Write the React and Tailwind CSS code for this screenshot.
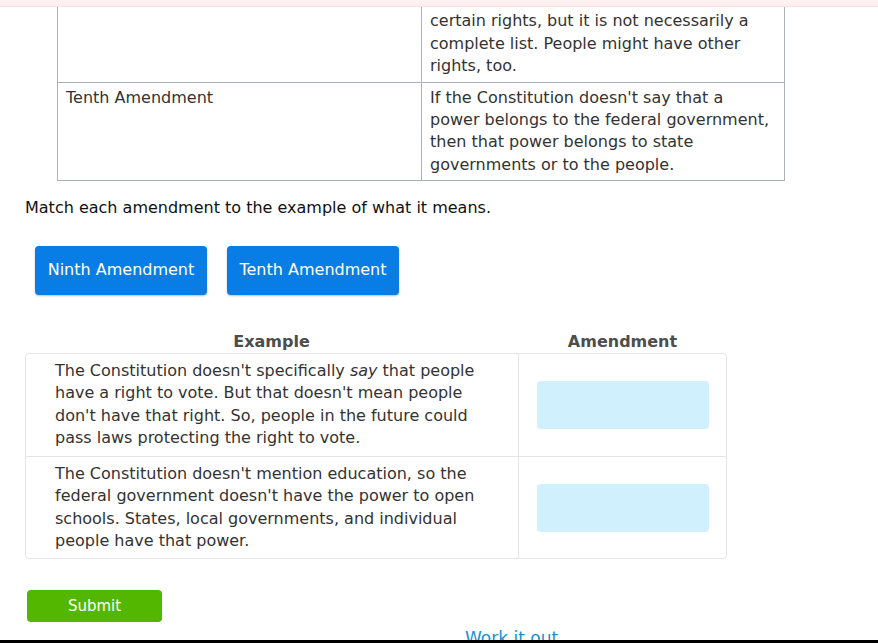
import React from "react";

const font = { fontFamily: '"DejaVu Sans", Verdana, sans-serif' };

const refRows = [
  {
    name: "Ninth Amendment",
    text: "The Constitution lists, or enumerates, certain rights, but it is not necessarily a complete list. People might have other rights, too.",
  },
  {
    name: "Tenth Amendment",
    text: "If the Constitution doesn't say that a power belongs to the federal government, then that power belongs to state governments or to the people.",
  },
];

const App = () => {
  return (
    <div className="w-[878px] h-[643px] overflow-hidden bg-white text-[16px] leading-[22.4px]" style={font}>
      <div className="h-[640px] overflow-hidden flex flex-col">
        {/* top band */}
        <div className="h-[7px] shrink-0 bg-[#fff1f1] border-b border-[#fbdede]" />

        {/* reference table (scrolled) */}
        <div className="overflow-hidden shrink-0">
          <div className="ml-[57px] w-[728px] -mt-[24px] border border-[#a7b3b9] text-[#333]">
            {refRows.map((r, i) => (
              <div key={r.name} className={`grid grid-cols-2 ${i > 0 ? "border-t border-[#a7b3b9]" : ""}`}>
                <div className="px-2 py-1">{r.name}</div>
                <div className="px-2 py-1 border-l border-[#a7b3b9]">{r.text}</div>
              </div>
            ))}
          </div>
        </div>

        <p className="ml-[25px] mt-[16px] text-[#111]">Match each amendment to the example of what it means.</p>

        {/* draggable answers */}
        <div className="flex gap-5 ml-[35px] mt-[26px]">
          {["Ninth Amendment", "Tenth Amendment"].map((t) => (
            <button
              key={t}
              className="w-[172px] h-[49px] rounded-[4px] bg-[#097de6] text-white shadow-[0_1px_2px_rgba(0,0,0,0.25)]"
            >
              {t}
            </button>
          ))}
        </div>

        {/* match table */}
        <div className="ml-[25px] w-[702px] mt-[36px]">
          <div className="grid grid-cols-[493px_209px] font-bold text-[#4d4d4d]">
            <div className="text-center">Example</div>
            <div className="text-center">Amendment</div>
          </div>
          <div className="border border-[#e6e6e6] rounded-[4px] text-[#333]">
            <div className="grid grid-cols-[492px_208px]">
              <div className="pl-[29px] pr-[24px] pt-[6px] pb-[6px]">
                The Constitution doesn't specifically <em>say</em> that people have a right to vote. But that doesn't
                mean people don't have that right. So, people in the future could pass laws protecting the right to
                vote.
              </div>
              <div className="border-l border-[#e6e6e6] flex items-center justify-center">
                <div className="w-[172px] h-[48px] rounded-[4px] bg-[#cff0fc]" />
              </div>
            </div>
            <div className="grid grid-cols-[492px_208px] border-t border-[#e6e6e6]">
              <div className="pl-[29px] pr-[24px] pt-[6px] pb-[6px]">
                The Constitution doesn't mention education, so the federal government doesn't have the power to open
                schools. States, local governments, and individual people have that power.
              </div>
              <div className="border-l border-[#e6e6e6] flex items-center justify-center">
                <div className="w-[172px] h-[48px] rounded-[4px] bg-[#cff0fc]" />
              </div>
            </div>
          </div>
        </div>

        <button className="ml-[27px] mt-[31px] w-[135px] h-[32px] shrink-0 rounded-[4px] bg-[#53b700] text-white text-[15px]">
          Submit
        </button>

        <div className="mt-[5px] shrink-0 pl-[465px] text-[17px] text-[#1a8fd6]">Work it out</div>
      </div>
      <div className="h-[3px] bg-black" />
    </div>
  );
};

export default App;
